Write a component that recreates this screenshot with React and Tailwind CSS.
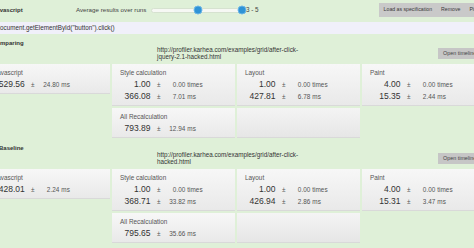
import React from 'react';

const sections = [
  {
    title: 'Comparing',
    pad: 'pl-[6px]',
    url: ['http://profiler.karhea.com/examples/grid/after-click-', 'jquery-2.1-hacked.html'],
    js: [{ v: '1529.56', e: '24.80', u: 'ms' }],
    style: [{ v: '1.00', e: '0.00', u: 'times' }, { v: '366.08', e: '7.01', u: 'ms' }],
    layout: [{ v: '1.00', e: '0.00', u: 'times' }, { v: '427.81', e: '6.78', u: 'ms' }],
    paint: [{ v: '4.00', e: '0.00', u: 'times' }, { v: '15.35', e: '2.44', u: 'ms' }],
    recalc: [{ v: '793.89', e: '12.94', u: 'ms' }],
  },
  {
    title: 'Baseline',
    pad: 'pl-[13px]',
    url: ['http://profiler.karhea.com/examples/grid/after-click-', 'hacked.html'],
    js: [{ v: '1428.01', e: '2.24', u: 'ms' }],
    style: [{ v: '1.00', e: '0.00', u: 'times' }, { v: '368.71', e: '33.82', u: 'ms' }],
    layout: [{ v: '1.00', e: '0.00', u: 'times' }, { v: '426.94', e: '2.86', u: 'ms' }],
    paint: [{ v: '4.00', e: '0.00', u: 'times' }, { v: '15.31', e: '3.47', u: 'ms' }],
    recalc: [{ v: '795.65', e: '35.66', u: 'ms' }],
  },
];

// one measurement box: label + value ± error rows
function Card({ label, rows, className = '' }) {
  return (
    <div className={`bg-gradient-to-b from-[#f7f7f7] to-[#e9e9e9] border-b border-[#d9d9d9] pt-[4px] pb-[3px] ${className}`}>
      <div className="h-[10px] leading-[10px] pl-[8px] text-[6.4px] text-[#555]">{label}</div>
      {rows.map((r, i) => (
        <div key={i} className="flex items-baseline h-[12px] leading-[12px]">
          <span className="pl-[8px] w-[38.5px] text-right text-[8.5px] text-[#333] shrink-0">{r.v}</span>
          <span className="ml-[6.5px] text-[6.4px] text-[#555]">±</span>
          <span className="w-[24.8px] text-right text-[6.4px] text-[#555] shrink-0">{r.e}</span>
          <span className="ml-[2px] text-[6.4px] text-[#555]">{r.u}</span>
        </div>
      ))}
    </div>
  );
}

function Section({ s, className = '' }) {
  return (
    <div className={`pt-[1px] ${className}`}>
      <div className={`h-[10px] leading-[10px] text-[6px] font-bold text-[#333] ${s.pad}`}>{s.title}</div>
      <div className="flex items-start mt-[-0.6px]">
        <div className="ml-[171px] w-[281px] text-[6.3px] leading-[6.6px] text-[#333]">
          <div>{s.url[0]}</div>
          <div>{s.url[1]}</div>
        </div>
        <div className="h-[11px] leading-[11px] mt-[0.2px] bg-[#c6c6c6] px-[5px] text-[5.4px] text-[#444] whitespace-nowrap">
          Open timeline
        </div>
      </div>
      <div className="grid grid-cols-[124px_123px_123px_123px] gap-[2px] mt-[3.4px]">
        <Card label="Javascript" rows={s.js} className="self-start" />
        <Card label="Style calculation" rows={s.style} />
        <Card label="Layout" rows={s.layout} />
        <Card label="Paint" rows={s.paint} />
        <div />
        <Card label="All Recalculation" rows={s.recalc} />
        <div className="bg-gradient-to-b from-[#f4f4f4] to-[#e6e6e6] border-b border-[#d9d9d9]" />
        <div />
      </div>
    </div>
  );
}

export default function App() {
  return (
    <div className="w-[474px] h-[248px] overflow-hidden bg-[#dff0d8] font-['Liberation_Sans',Arial,sans-serif]">
      <div className="ml-[-14px] w-[510px]">
        {/* toolbar */}
        <div className="flex items-center h-[20px]">
          <span className="pl-[7px] w-[90px] text-[6px] font-bold text-[#333]">Javascript</span>
          <span className="w-[75px] text-[6.2px] text-[#444]">Average results over runs</span>
          <div className="relative w-[90px] h-[5px] rounded-full bg-[#f6f8f4] border border-[#d6e2d0]">
            <span className="absolute top-1/2 left-[46px] -translate-x-1/2 -translate-y-1/2 w-[9px] h-[9px] rounded-full bg-[#2f93d6] border border-[#6cb6e6]" />
            <span className="absolute top-1/2 left-[90px] -translate-x-1/2 -translate-y-1/2 w-[9px] h-[9px] rounded-full bg-[#2f93d6] border border-[#6cb6e6]" />
          </div>
          <span className="ml-[5px] text-[6.3px] text-[#444]">3 - 5</span>
          <div className="ml-[120px] flex h-[14px] items-center bg-[#c9c9c9] text-[5.2px] text-[#3a3a3a] whitespace-nowrap">
            <span className="pl-[5px] pr-[4.5px]">Load as specification</span>
            <span className="px-[4.5px]">Remove</span>
            <span className="px-[4.5px]">Pin</span>
          </div>
        </div>
        {/* code input */}
        <div className="mt-[2px] h-[12px] leading-[12px] bg-[#f0f0fa] pl-[10.5px] text-[6.3px] text-[#333]">
          document.getElementById("button").click()
        </div>
        <Section s={sections[0]} className="mt-[3px]" />
        <Section s={sections[1]} className="mt-[4px]" />
      </div>
    </div>
  );
}
